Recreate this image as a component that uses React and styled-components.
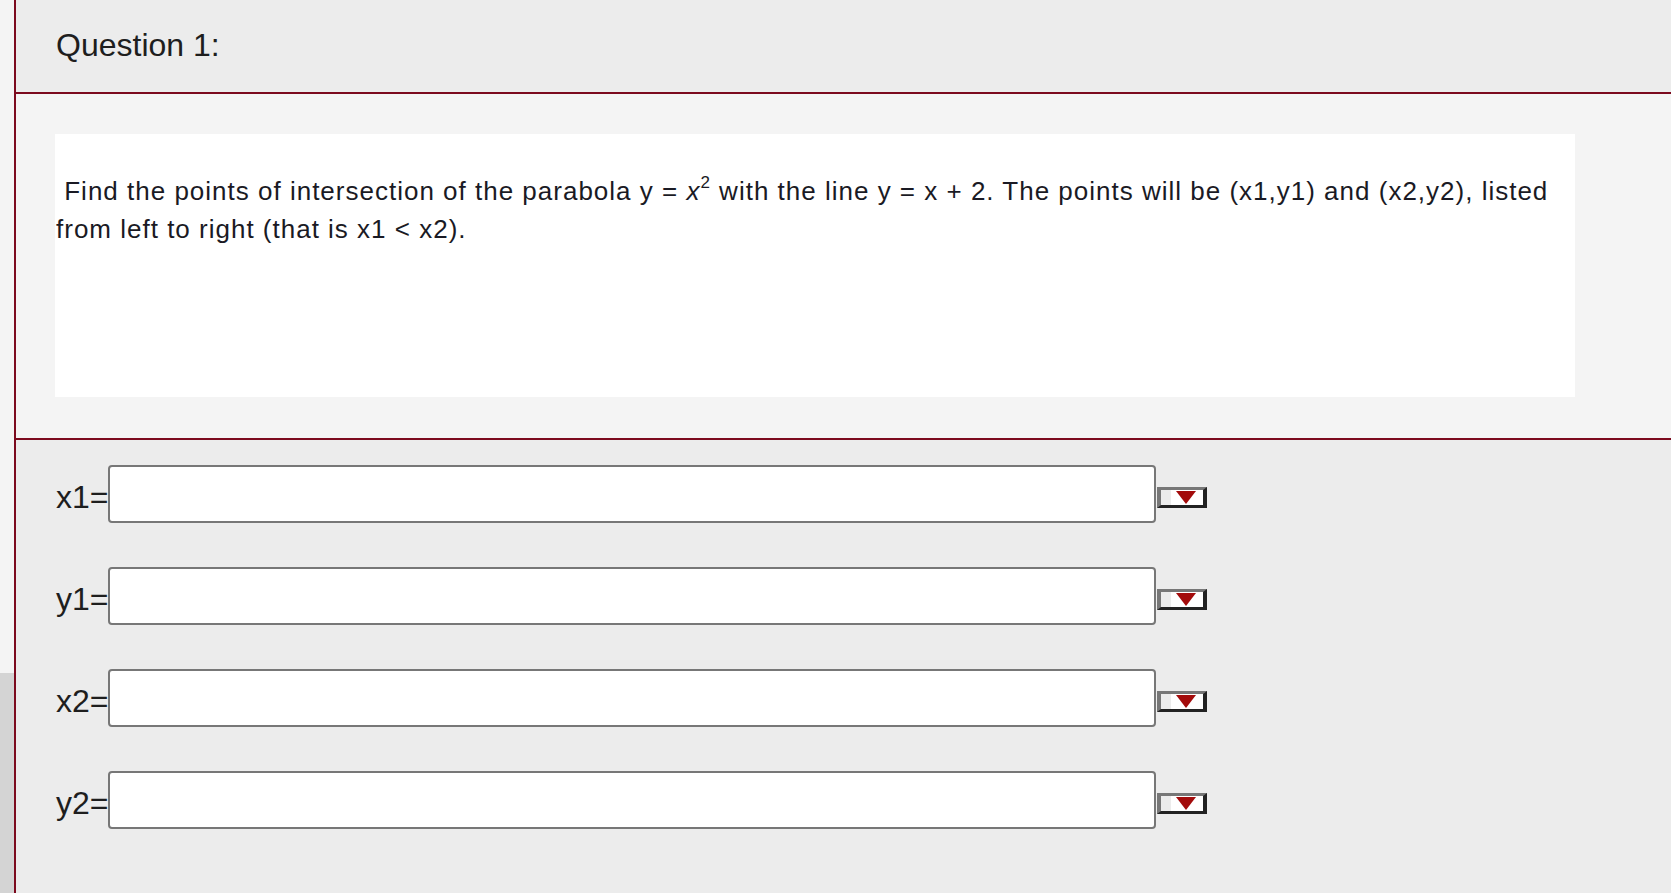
import React from "react";
import styled, { createGlobalStyle } from "styled-components";

const GlobalStyle = createGlobalStyle`
  html, body {
    margin: 0;
    padding: 0;
    background: #ececec;
    font-family: "Liberation Sans", Arial, sans-serif;
    color: #222;
  }
  * { box-sizing: border-box; }
`;

const RED = "#7c0a1e";

const Page = styled.div`
  display: flex;
  height: 100vh;
  overflow: hidden;
`;

const SideStrip = styled.div`
  width: 14px;
  display: flex;
  flex-direction: column;
`;

const StripPart = styled.div`
  background: ${(p) => (p.dark ? "#d4d4d4" : "#f4f4f4")};
  flex: ${(p) => (p.dark ? "0 0 220px" : "1")};
`;

const Main = styled.main`
  flex: 1;
  display: flex;
  flex-direction: column;
  border-left: 2px solid ${RED};
`;

const Header = styled.header`
  height: 94px;
  background: #ececec;
  border-bottom: 2px solid ${RED};
  padding: 26px 0 0 40px;
  flex-shrink: 0;
`;

const Title = styled.h2`
  margin: 0;
  font-weight: 400;
  font-size: 32px;
  line-height: 38px;
  color: #1e1e1e;
`;

const PromptSection = styled.section`
  background: #f4f4f4;
  padding: 40px 96px 41px 39px;
  flex-shrink: 0;
`;

const PromptBox = styled.div`
  background: #fff;
  height: 263px;
  padding: 38px 10px 0 1px;
  font-size: 26px;
  letter-spacing: 1px;
  line-height: 38px;
  color: #1a1a24;
`;

const Sup = styled.sup`
  font-size: 17px;
  line-height: 0;
  vertical-align: 12px;
`;

const Var = styled.i`
  font-style: italic;
`;

const Answers = styled.section`
  flex: 1;
  background: #ececec;
  border-top: 2px solid ${RED};
  padding: 25px 0 0 40px;
  display: flex;
  flex-direction: column;
  gap: 44px;
`;

const Row = styled.div`
  display: flex;
  align-items: center;
  height: 58px;
`;

const Label = styled.label`
  font-size: 32px;
  line-height: 1;
  color: #1e1e1e;
  margin-top: 6px;
`;

const Field = styled.input`
  width: 1048px;
  height: 58px;
  border: 2px solid #777;
  border-radius: 4px;
  background: #fff;
  font-size: 24px;
  padding: 0 10px;
  outline: none;
`;

const DropIcon = styled.span`
  align-self: flex-start;
  margin-top: 22px;
  margin-left: 1px;
  width: 50px;
  height: 21px;
  border-style: solid;
  border-width: 3px 4px 3px 4px;
  border-color: #777 #222 #222 #777;
  background: linear-gradient(to right, #ececec 0 10px, #fff 10px 100%);
  display: flex;
  align-items: center;
  justify-content: center;
  padding-left: 8px;
`;

function Arrow() {
  return (
    <svg width="20" height="13" viewBox="0 0 20 13">
      <polygon points="0,0 20,0 10,13" fill="#a30b0b" />
    </svg>
  );
}

const fields = ["x1", "y1", "x2", "y2"];

export default function App() {
  return (
    <>
      <GlobalStyle />
      <Page>
        <SideStrip>
          <StripPart />
          <StripPart dark />
        </SideStrip>
        <Main>
          <Header>
            <Title>Question 1:</Title>
          </Header>
          <PromptSection>
            <PromptBox>
              &nbsp;Find the points of intersection of the parabola y = <Var>x</Var>
              <Sup>2</Sup> with the line y = x + 2. The points will be (x1,y1) and
              (x2,y2), listed from left to right (that is x1 &lt; x2).
            </PromptBox>
          </PromptSection>
          <Answers>
            {fields.map((f) => (
              <Row key={f}>
                <Label htmlFor={f}>{f}=</Label>
                <Field id={f} type="text" />
                <DropIcon>
                  <Arrow />
                </DropIcon>
              </Row>
            ))}
          </Answers>
        </Main>
      </Page>
    </>
  );
}
